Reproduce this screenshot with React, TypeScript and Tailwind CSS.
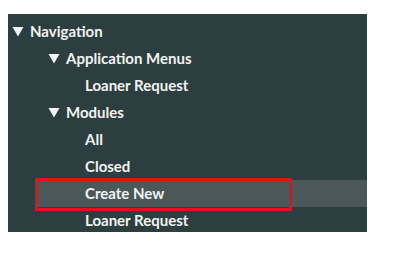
import React from "react";

interface Item {
  label: string;
  level: number;
  open?: boolean;
  active?: boolean;
}

const items: Item[] = [
  { label: "Navigation", level: 0, open: true },
  { label: "Application Menus", level: 1, open: true },
  { label: "Loaner Request", level: 2 },
  { label: "Modules", level: 1, open: true },
  { label: "All", level: 2 },
  { label: "Closed", level: 2 },
  { label: "Create New", level: 2, active: true },
  { label: "Loaner Request", level: 2 },
];

const indent = ["pl-[4px]", "pl-[40px]", "pl-[77px]"];

function Triangle() {
  return (
    <svg width="12" height="11" viewBox="0 0 12 11" className="mr-[6px] shrink-0">
      <path d="M0.5 1 L11.5 1 L6 10.5 Z" fill="#f2f4f4" />
    </svg>
  );
}

export default function App() {
  return (
    <div className="w-[395px] h-[258px] bg-white pt-[14px] pl-[8px]">
      <div
        className="w-[359px] h-[218px] bg-[#2c3e40] overflow-hidden pt-[4px] text-[#f2f4f4] text-[15px] font-bold"
        style={{ fontFamily: "Lato, 'Open Sans', sans-serif" }}
      >
        {items.map((item, i) => (
          <div key={i} className={`relative h-[27px] ${indent[item.level]}`}>
            {item.active && (
              <div className="absolute left-[30px] right-0 top-0 h-[27px] bg-[#4a585a]" />
            )}
            <div className="relative flex items-center h-full">
              {item.open && <Triangle />}
              <span>{item.label}</span>
            </div>
            {item.active && (
              <div className="absolute left-[27px] w-[257px] top-[-2px] h-[33px] border-[3px] border-[#e0121c]" />
            )}
          </div>
        ))}
      </div>
    </div>
  );
}
